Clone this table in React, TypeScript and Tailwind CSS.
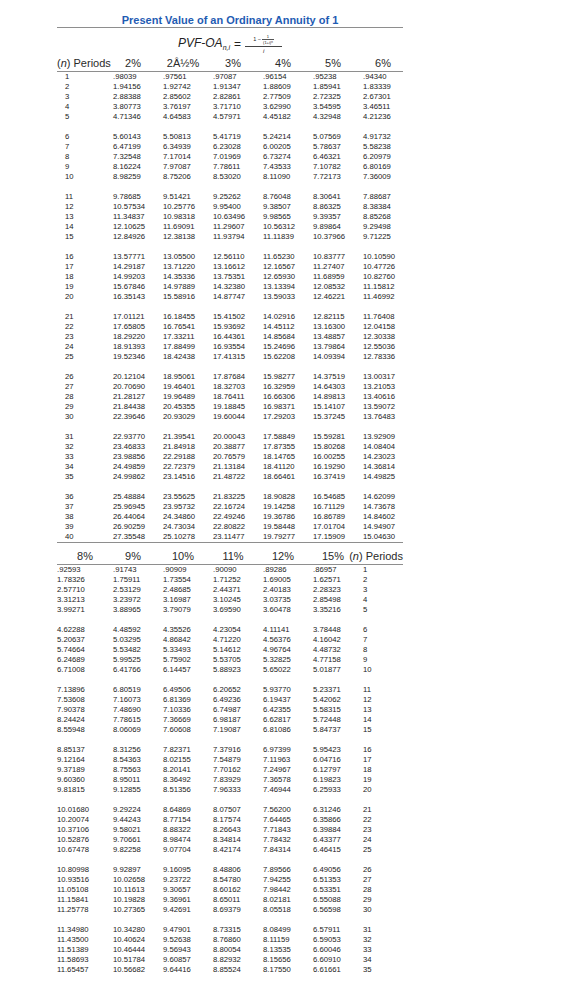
import React from 'react';

// PV factor of an ordinary annuity: (1 - 1/(1+i)^n) / i
const pvf = (rate: number, n: number) => (1 - Math.pow(1 + rate, -n)) / rate;

const fmt = (v: number) => {
  const s = v.toFixed(5);
  return s.startsWith('0.') ? s.slice(1) : s;
};

const TOP_RATES = [
  { rate: 0.02, label: '2%' },
  { rate: 0.025, label: '2Â½%' },
  { rate: 0.03, label: '3%' },
  { rate: 0.04, label: '4%' },
  { rate: 0.05, label: '5%' },
  { rate: 0.06, label: '6%' },
];

const BOTTOM_RATES = [
  { rate: 0.08, label: '8%' },
  { rate: 0.09, label: '9%' },
  { rate: 0.1, label: '10%' },
  { rate: 0.11, label: '11%' },
  { rate: 0.12, label: '12%' },
  { rate: 0.15, label: '15%' },
];

const GRID = 'grid grid-cols-[56px_50px_50px_50px_50px_50px_40px]';

function PeriodsLabel() {
  return (
    <span className="whitespace-nowrap">
      (<i>n</i>) Periods
    </span>
  );
}

interface TableProps {
  rates: { rate: number; label: string }[];
  periods: number;
  side: 'left' | 'right';
  className?: string;
}

function AnnuityTable({ rates, periods, side, className = '' }: TableProps) {
  const groups: number[][] = [];
  for (let start = 1; start <= periods; start += 5) {
    groups.push(Array.from({ length: 5 }, (_, k) => start + k).filter((n) => n <= periods));
  }

  return (
    <div className={className}>
      {/* header */}
      <div className={`${GRID} h-[16px] pb-[2px] leading-[14px] text-[11px] text-[#2a2a2a] border-b border-[#8e8e8e]`}>
        {side === 'left' && (
          <div>
            <PeriodsLabel />
          </div>
        )}
        {rates.map((r, i) =>
          side === 'right' && i === 0 ? (
            <div key={r.label} className="text-center">
              {r.label}
            </div>
          ) : (
            <div key={r.label} className="w-[40px] text-center whitespace-nowrap">
              {r.label}
            </div>
          )
        )}
        {side === 'right' && (
          <div className="flex justify-end">
            <PeriodsLabel />
          </div>
        )}
      </div>

      {/* rows, in blocks of five */}
      <div className="flex flex-col gap-[10px]">
        {groups.map((g) => (
          <div key={g[0]} className="flex flex-col">
            {g.map((n) => (
              <div key={n} className={`${GRID} h-[10px] leading-[10px] text-[7.7px] text-[#222]`}>
                {side === 'left' && <div className="pl-[8px]">{n}</div>}
                {rates.map((r) => (
                  <div key={r.label}>{fmt(pvf(r.rate, n))}</div>
                ))}
                {side === 'right' && <div>{n}</div>}
              </div>
            ))}
          </div>
        ))}
      </div>
    </div>
  );
}

function Formula() {
  return (
    <div className="flex h-[28px] items-center justify-center gap-[4px] pt-[4px] text-[#222]">
      <span className="text-[12px] italic leading-none">
        PVF-OA<span className="align-sub text-[7px]">n,i</span>
      </span>
      <span className="text-[12px] leading-none">=</span>
      <span className="inline-flex flex-col items-center leading-none">
        <span className="flex items-center gap-[1px] pb-[1px] text-[5.5px]">
          1 −
          <span className="inline-flex flex-col items-center text-[4px] leading-[5px]">
            <span>1</span>
            <span className="border-t border-[#555] px-[1px]">
              (1+<i>i</i>)<sup className="text-[3px]">n</sup>
            </span>
          </span>
        </span>
        <span className="w-[37px] border-t border-[#444]" />
        <span className="pt-[1px] text-[6px] italic">i</span>
      </span>
    </div>
  );
}

export default function App() {
  return (
    <div
      className="min-h-[994px] w-[574px] bg-white pt-[13px]"
      style={{ fontFamily: '"Liberation Sans", Arial, Helvetica, sans-serif' }}
    >
      <div className="ml-[57px] w-[346px]">
        <h1 className="h-[15px] border-b border-[#8e8e8e] text-center text-[11px] font-bold leading-[14px] text-[#1f5cb3]">
          Present Value of an Ordinary Annuity of 1
        </h1>
        <Formula />

        <AnnuityTable rates={TOP_RATES} periods={40} side="left" className="border-b border-[#8e8e8e]" />
        <AnnuityTable rates={BOTTOM_RATES} periods={35} side="right" className="mt-[6px]" />
      </div>
    </div>
  );
}
